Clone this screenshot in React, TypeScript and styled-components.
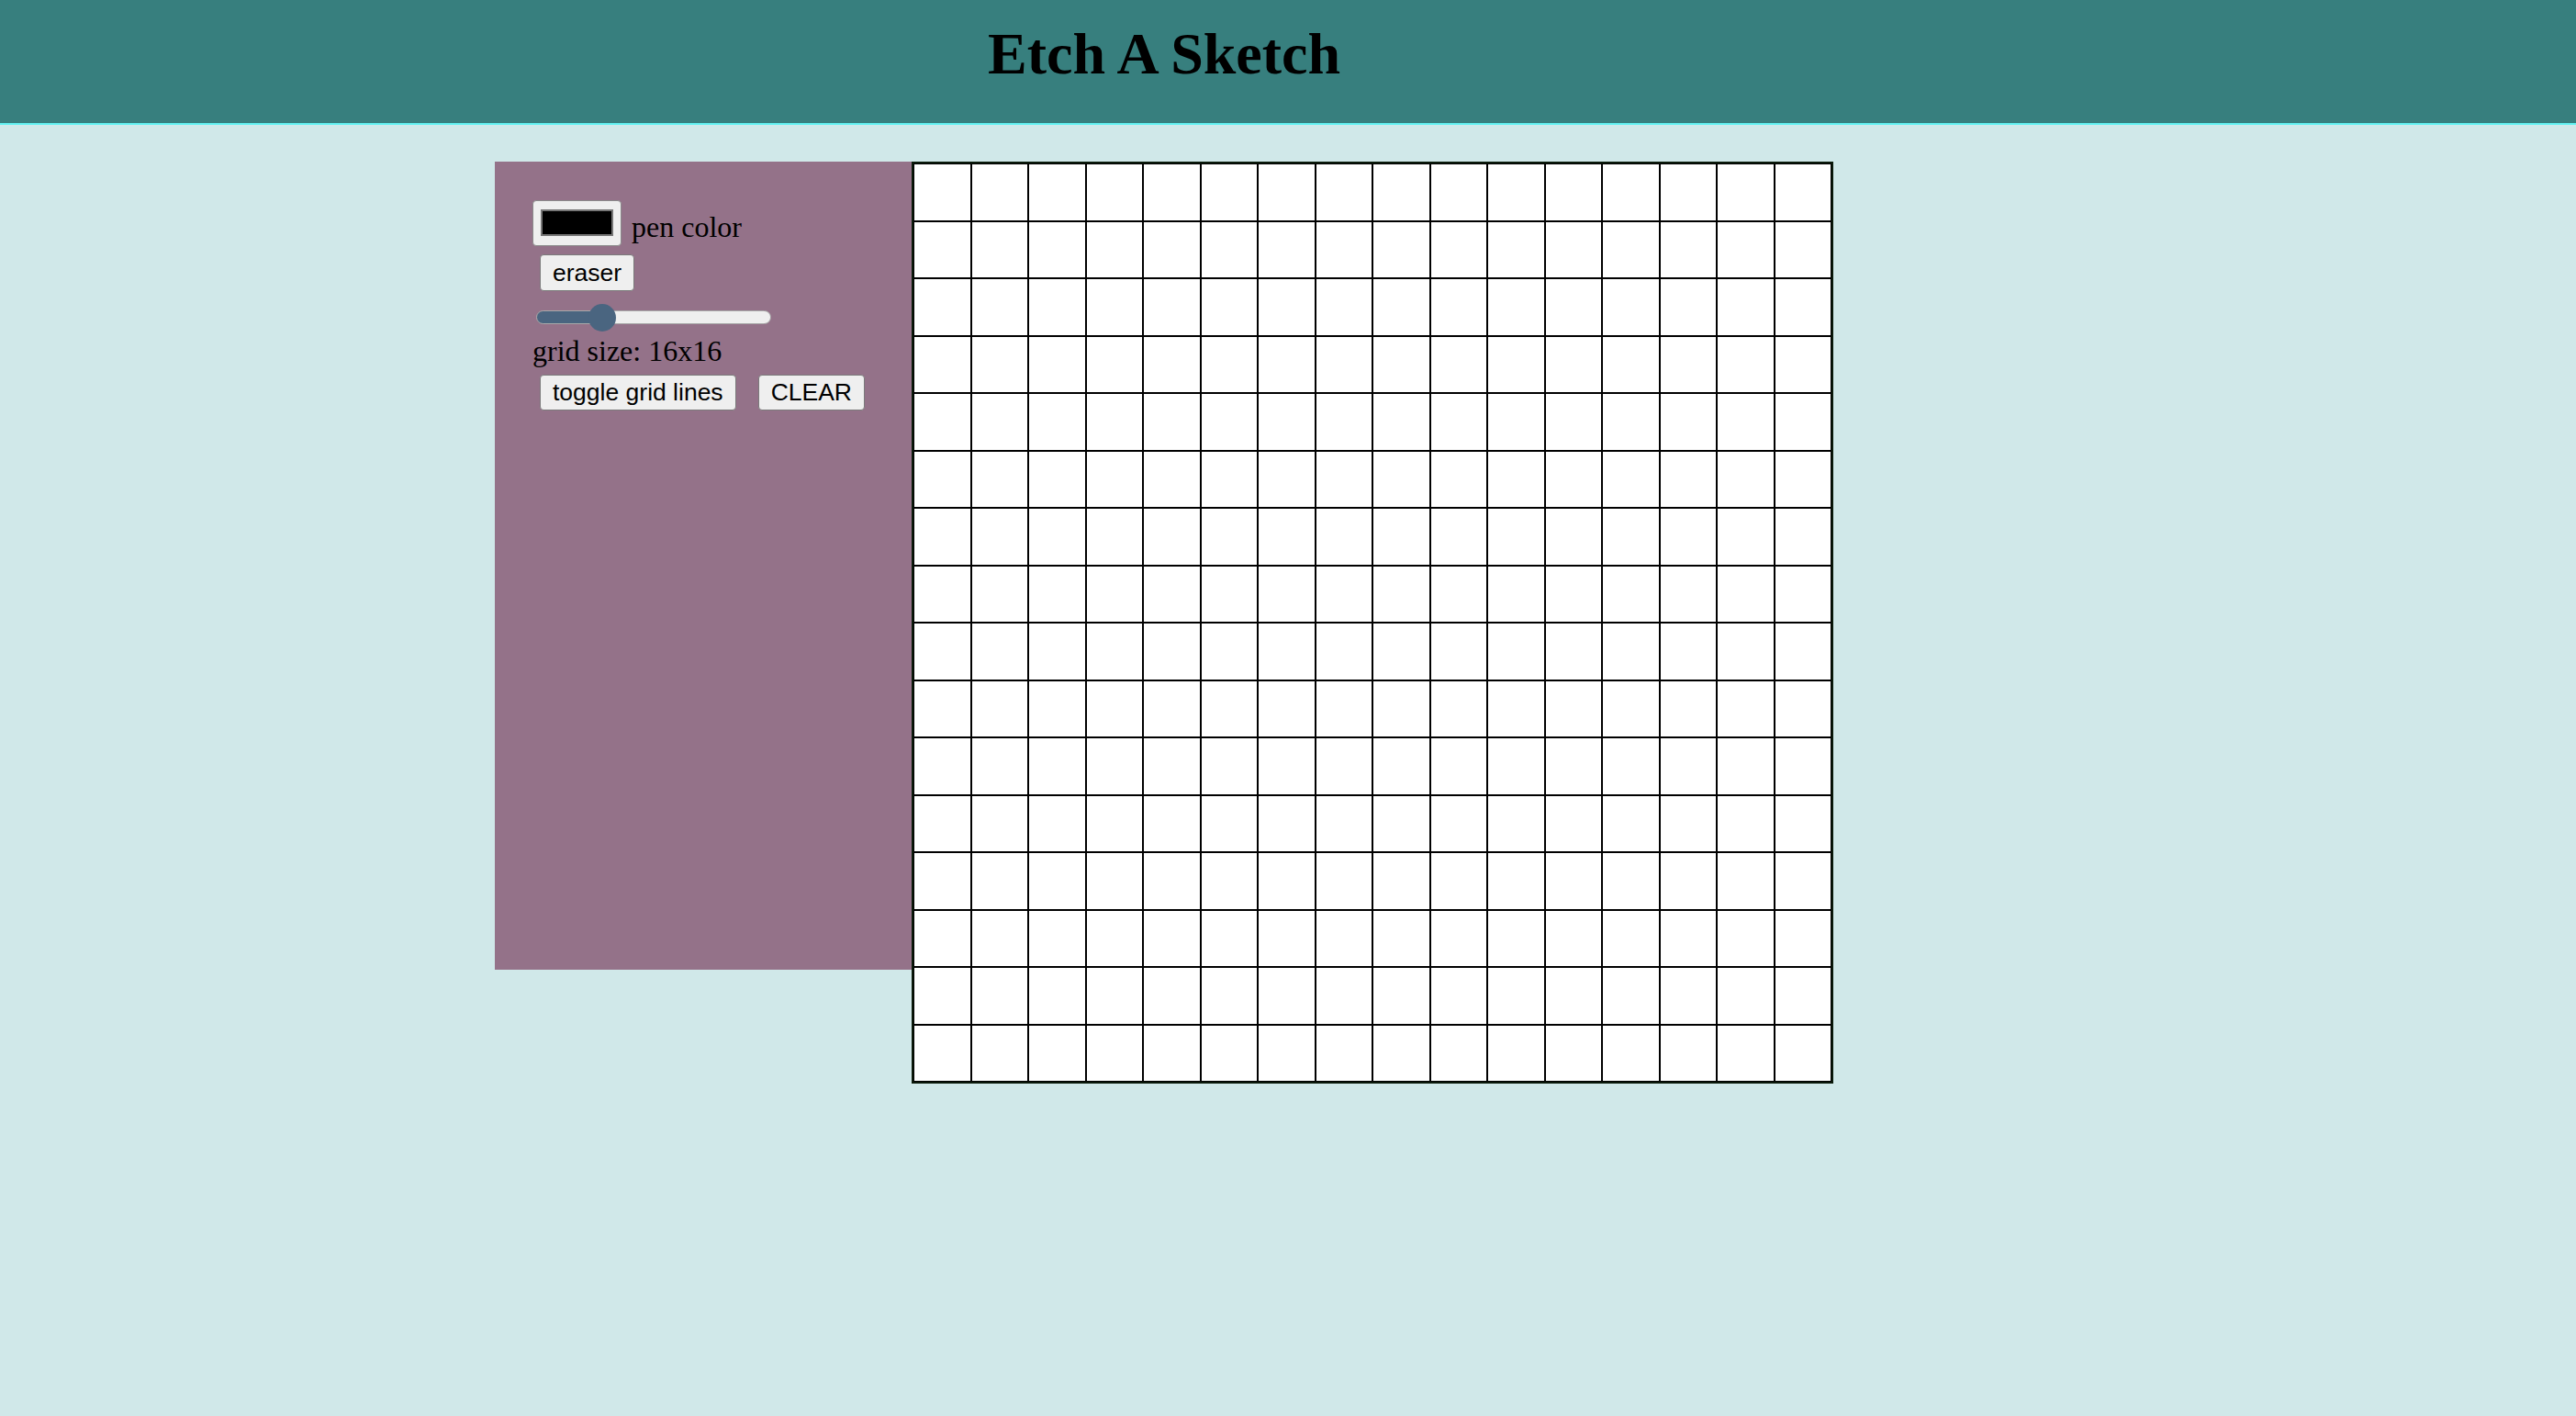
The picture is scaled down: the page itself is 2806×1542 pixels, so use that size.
import React, { FC, useState } from 'react';
import styled, { createGlobalStyle } from 'styled-components';

const GlobalStyle = createGlobalStyle`
    html, body {
        margin: 0;
        padding: 0;
        background: #d0e8e9;
        min-height: 100%;
    }
    body {
        font-family: "Liberation Serif", "Times New Roman", serif;
    }
`;

const Header = styled.header`
    height: 136px;
    box-sizing: border-box;
    padding: 27px 0 0 1076px;
    background: #377f7e;
    border-bottom: 2px solid #62f2f2;
`;

const Title = styled.h1`
    margin: 0;
    font-family: "Liberation Serif", "Times New Roman", serif;
    font-size: 64px;
    font-weight: bold;
    line-height: 1;
    color: #000;
`;

const Main = styled.main`
    display: flex;
    align-items: flex-start;
    padding: 40px 0 0 539px;
`;

const Panel = styled.section`
    width: 454px;
    height: 880px;
    box-sizing: border-box;
    padding: 42px 0 0 41px;
    display: flex;
    flex-direction: column;
    background: #947289;
`;

const PenRow = styled.div`
    display: flex;
    align-items: flex-end;
    gap: 11px;
`;

const ColorInput = styled.input.attrs({ type: 'color' })`
    width: 97px;
    height: 50px;
    box-sizing: border-box;
    padding: 9px 8px 10px;
    margin: 0;
    background: #efefef;
    border: 1px solid #8a8a8a;
    border-radius: 4px;
    cursor: pointer;

    &::-webkit-color-swatch-wrapper {
        padding: 0;
    }

    &::-webkit-color-swatch {
        border: 2px solid #767676;
        border-radius: 0;
    }
`;

const Label = styled.span<{ $top?: number; $bottom?: number }>`
    font-size: 32px;
    line-height: 1;
    color: #000;
    margin-top: ${p => p.$top ?? 0}px;
    margin-bottom: ${p => p.$bottom ?? 0}px;
`;

const Button = styled.button<{ $active?: boolean; $height?: number }>`
    align-self: flex-start;
    height: ${p => p.$height ?? 40}px;
    box-sizing: border-box;
    padding: 0 13px;
    margin: 0;
    font-family: "Liberation Sans", Arial, sans-serif;
    font-size: 26.5px;
    line-height: 1;
    color: #000;
    background: ${p => (p.$active ? '#cfcfcf' : '#efefef')};
    border: 1px solid #7a7a7a;
    border-radius: 4px;
    cursor: pointer;
`;

const EraserButton = styled(Button)`
    margin: 9px 0 0 8px;
`;

const Slider = styled.input.attrs({ type: 'range' })`
    -webkit-appearance: none;
    appearance: none;
    display: block;
    width: 256px;
    height: 15px;
    box-sizing: border-box;
    margin: 21px 0 0 4px;
    border: 1px solid #a8a8a8;
    border-radius: 8px;
    outline: none;
    cursor: pointer;

    &::-webkit-slider-thumb {
        -webkit-appearance: none;
        width: 30px;
        height: 30px;
        border: none;
        border-radius: 50%;
        background: #4a6580;
    }
`;

const ButtonRow = styled.div`
    display: flex;
    gap: 24px;
    margin: 10px 0 0 8px;
`;

const Board = styled.div<{ $size: number }>`
    width: 1004px;
    height: 1004px;
    box-sizing: border-box;
    display: grid;
    grid-template-columns: repeat(${p => p.$size}, 1fr);
    grid-template-rows: repeat(${p => p.$size}, 1fr);
    border: 2px solid #0b1a0b;
    background: #fff;
`;

const Cell = styled.div<{ $lines: boolean }>`
    border: ${p => (p.$lines ? '1px solid #000' : 'none')};
`;

const MIN_SIZE = 0;
const MAX_SIZE = 64;

const blankGrid = (size: number) => Array.from({ length: size * size }, () => '#ffffff');

const App: FC = () => {
    const [size, setSize] = useState(16);
    const [penColor, setPenColor] = useState('#000000');
    const [eraser, setEraser] = useState(false);
    const [lines, setLines] = useState(true);
    const [cells, setCells] = useState<string[]>(() => blankGrid(16));

    const onSizeChange = (value: number) => {
        const next = Math.max(1, value);
        setSize(next);
        setCells(blankGrid(next));
    };

    const paint = (index: number) => {
        setCells(prev => {
            const next = [...prev];
            next[index] = eraser ? '#ffffff' : penColor;
            return next;
        });
    };

    // fill the track up to the thumb centre
    const ratio = (size - MIN_SIZE) / (MAX_SIZE - MIN_SIZE);
    const thumbAt = `calc(15px + (100% - 30px) * ${ratio})`;

    return (
        <>
            <GlobalStyle />
            <Header>
                <Title>Etch A Sketch</Title>
            </Header>
            <Main>
                <Panel>
                    <PenRow>
                        <ColorInput value={penColor} onChange={e => setPenColor(e.target.value)} />
                        <Label $bottom={5}>pen color</Label>
                    </PenRow>
                    <EraserButton $active={eraser} onClick={() => setEraser(v => !v)}>
                        eraser
                    </EraserButton>
                    <Slider
                        min={MIN_SIZE}
                        max={MAX_SIZE}
                        value={size}
                        onChange={e => onSizeChange(Number(e.target.value))}
                        style={{
                            background: `linear-gradient(to right, #4a6580 0, #4a6580 ${thumbAt}, #efefef ${thumbAt}, #efefef 100%)`
                        }}
                    />
                    <Label $top={13}>
                        grid size: {size}x{size}
                    </Label>
                    <ButtonRow>
                        <Button $height={39} onClick={() => setLines(v => !v)}>
                            toggle grid lines
                        </Button>
                        <Button $height={39} onClick={() => setCells(blankGrid(size))}>
                            CLEAR
                        </Button>
                    </ButtonRow>
                </Panel>
                <Board $size={size}>
                    {cells.map((color, i) => (
                        <Cell
                            key={i}
                            $lines={lines}
                            style={{ background: color }}
                            onMouseOver={() => paint(i)}
                        />
                    ))}
                </Board>
            </Main>
        </>
    );
};

export default App;
